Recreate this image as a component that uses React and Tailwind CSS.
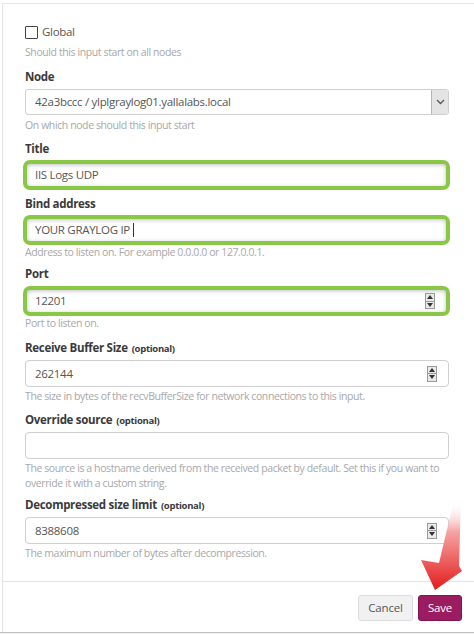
import React from 'react';

function Spinner() {
  return (
    <div className="flex flex-col w-[10px] h-[16px] border border-[#9a9a9a] bg-[#e9e9e9] mr-[11px]">
      <div className="flex-1 flex items-center justify-center border-b border-[#9a9a9a]">
        <div className="w-0 h-0 border-l-[3px] border-r-[3px] border-b-[4px] border-l-transparent border-r-transparent border-b-[#333]" />
      </div>
      <div className="flex-1 flex items-center justify-center">
        <div className="w-0 h-0 border-l-[3px] border-r-[3px] border-t-[4px] border-l-transparent border-r-transparent border-t-[#333]" />
      </div>
    </div>
  );
}

function Label({ children, optional, className = '' }) {
  return (
    <div className={`flex items-baseline h-[16px] text-[11.5px] leading-[16px] font-bold tracking-[-0.3px] text-[#3a3a3a] ${className}`}>
      <span>{children}</span>
      {optional && <span className="text-[9.5px] leading-[16px] ml-[4px]">(optional)</span>}
    </div>
  );
}

function Help({ children, className = '' }) {
  return <p className={`text-[10.5px] leading-[15px] tracking-[-0.4px] text-[#a8a8a8] ${className}`}>{children}</p>;
}

function Field({ value, spinner, className = '' }) {
  return (
    <div className={`flex items-center mr-[25px] h-[27px] border border-[#cfcfcf] rounded-[4px] bg-white ${className}`}>
      <span className="flex-1 pl-[9px] text-[11.5px] tracking-[-0.3px] text-[#555]">{value}</span>
      {spinner && <Spinner />}
    </div>
  );
}

function GreenField({ value, spinner, cursor, className = '' }) {
  return (
    <div className={`flex items-center -ml-[2px] mr-[24px] h-[30px] border-[4px] border-[#89c746] rounded-[7px] bg-white shadow-[inset_0_1px_4px_rgba(0,0,0,0.25)] ${className}`}>
      <span className="flex-1 pl-[8px] text-[11.5px] tracking-[-0.3px] text-[#555] flex items-center">
        {value}
        {cursor && <span className="inline-block w-[1px] h-[14px] bg-[#333] ml-[3px]" />}
      </span>
      {spinner && <Spinner />}
    </div>
  );
}

export default function App() {
  return (
    <div className="relative w-[474px] h-[635px] bg-white overflow-hidden font-['Open_Sans',sans-serif]">
      <div className="h-[3px]" />
      <div className="border-t border-l border-[#e6e6e6] ml-[2px]">
        <div className="pl-[22px]">
          <div className="flex items-center h-[16px] mt-[20px]">
            <div className="w-[13px] h-[13px] border-[1.5px] border-[#444] rounded-[1px] bg-white" />
            <span className="ml-[4px] text-[11.5px] tracking-[-0.3px] text-[#555]">Global</span>
          </div>
          <Help className="mt-[5px]">Should this input start on all nodes</Help>

          <Label className="mt-[9px]">Node</Label>
          <div className="flex items-stretch mr-[25px] h-[26px] mt-[4px] border border-[#cfcfcf] rounded-[3px] bg-white">
            <span className="flex-1 pl-[9px] text-[11.5px] tracking-[-0.3px] text-[#555] flex items-center">42a3bccc / ylplgraylog01.yallalabs.local</span>
            <div className="w-[17px] bg-[#e4e4e4] border-l border-[#b5b5b5] flex items-center justify-center rounded-r-[2px]">
              <svg width="9" height="6" viewBox="0 0 9 6"><path d="M1 1 L4.5 4.5 L8 1" fill="none" stroke="#555" strokeWidth="1.3" /></svg>
            </div>
          </div>
          <Help className="mt-[3px]">On which node should this input start</Help>

          <Label className="mt-[8px]">Title</Label>
          <GreenField value="IIS Logs UDP" className="mt-[3px]" />

          <Label className="mt-[6px]">Bind address</Label>
          <GreenField value="YOUR GRAYLOG IP" cursor className="mt-[3px]" />
          <Help>Address to listen on. For example 0.0.0.0 or 127.0.0.1.</Help>

          <Label className="mt-[6px]">Port</Label>
          <GreenField value="12201" spinner className="mt-[4px]" />
          <Help>Port to listen on.</Help>

          <Label optional className="mt-[9px]">Receive Buffer Size</Label>
          <Field value="262144" spinner className="mt-[4px]" />
          <Help className="mt-[2px]">The size in bytes of the recvBufferSize for network connections to this input.</Help>

          <Label optional className="mt-[8px]">Override source</Label>
          <Field value="" className="mt-[4px]" />
          <Help className="mt-[2px] pr-[28px]">The source is a hostname derived from the received packet by default. Set this if you want to override it with a custom string.</Help>

          <Label optional className="mt-[6px]">Decompressed size limit</Label>
          <Field value="8388608" spinner className="mt-[4px]" />
          <Help className="mt-[2px]">The maximum number of bytes after decompression.</Help>
        </div>

        <div className="mt-[20px] border-t border-[#e3e3e3] h-[51px] flex items-start justify-end pt-[13px] pr-[12px] gap-[5px]">
          <button className="h-[26px] w-[55px] bg-[#f1f1f1] border border-[#dcdcdc] rounded-[3px] text-[11.5px] tracking-[-0.2px] text-[#555]">Cancel</button>
          <button className="h-[26px] w-[44px] bg-[#9b1c5f] border border-[#84144f] rounded-[3px] text-[11.5px] tracking-[-0.2px] text-white">Save</button>
        </div>
      </div>
      <div className="border-t border-[#bdbdbd] h-[2px] bg-[#f4f4f4]" />

      <svg className="absolute left-0 top-0 pointer-events-none" width="474" height="635" viewBox="0 0 474 635">
        <defs>
          <linearGradient id="arr" x1="0" y1="0" x2="0" y2="1">
            <stop offset="0" stopColor="#ffffff" stopOpacity="0" />
            <stop offset="0.35" stopColor="#f6a4a4" />
            <stop offset="1" stopColor="#e41b1b" />
          </linearGradient>
        </defs>
        <polygon points="454,500 461,500 459,566 462,571 435,590 421,560 439,563" fill="url(#arr)" />
      </svg>
    </div>
  );
}
